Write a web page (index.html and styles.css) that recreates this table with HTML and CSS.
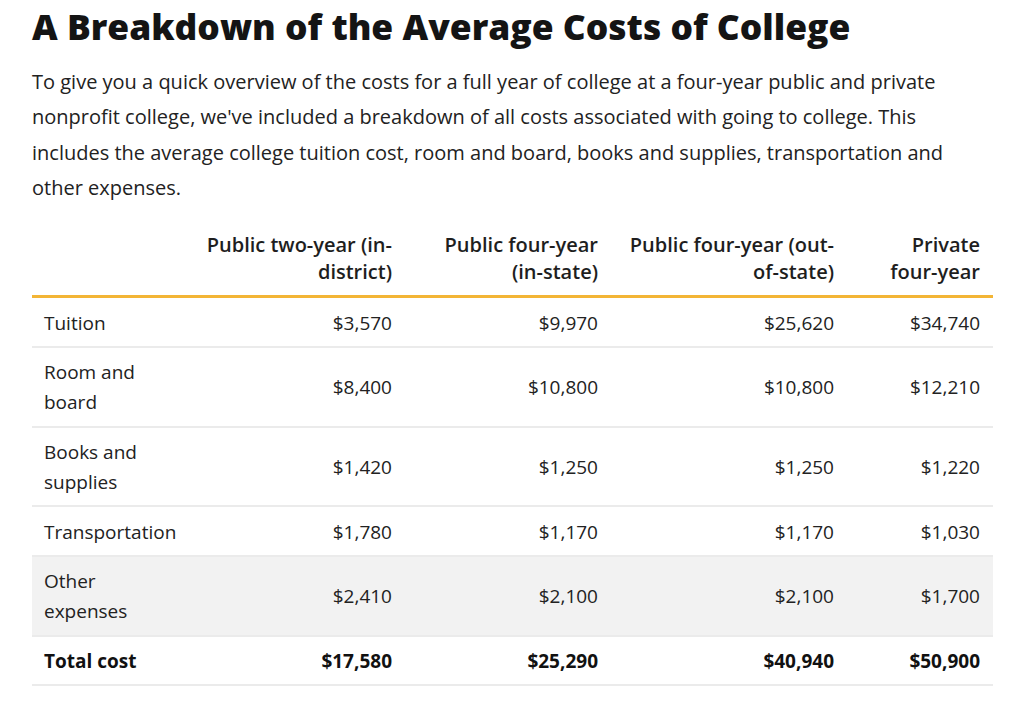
FILE: index.html
```html
<!DOCTYPE html>
<html lang="en">
<head>
<meta charset="utf-8">
<link rel="stylesheet" href="styles.css">
</head>
<body>
<main class="article">
  <h2 class="title">A Breakdown of the Average Costs of College</h2>
  <p class="intro">To give you a quick overview of the costs for a full year of college at a four-year public and private nonprofit college, we've included a breakdown of all costs associated with going to college. This includes the average college tuition cost, room and board, books and supplies, transportation and other expenses.</p>
  <table class="costs">
    <colgroup>
      <col class="c0"><col class="c1"><col class="c2"><col class="c3"><col class="c4">
    </colgroup>
    <thead>
      <tr>
        <th class="label"></th>
        <th>Public two-year (in-<br>district)</th>
        <th>Public four-year<br>(in-state)</th>
        <th>Public four-year (out-<br>of-state)</th>
        <th>Private<br>four-year</th>
      </tr>
    </thead>
    <tbody>
      <tr><td class="label">Tuition</td><td>$3,570</td><td>$9,970</td><td>$25,620</td><td>$34,740</td></tr>
      <tr><td class="label">Room and board</td><td>$8,400</td><td>$10,800</td><td>$10,800</td><td>$12,210</td></tr>
      <tr><td class="label">Books and supplies</td><td>$1,420</td><td>$1,250</td><td>$1,250</td><td>$1,220</td></tr>
      <tr><td class="label">Transportation</td><td>$1,780</td><td>$1,170</td><td>$1,170</td><td>$1,030</td></tr>
      <tr class="shaded"><td class="label">Other expenses</td><td>$2,410</td><td>$2,100</td><td>$2,100</td><td>$1,700</td></tr>
      <tr class="total"><td class="label">Total cost</td><td>$17,580</td><td>$25,290</td><td>$40,940</td><td>$50,900</td></tr>
    </tbody>
  </table>
</main>
</body>
</html>
```
FILE: styles.css
```css
html, body {
  margin: 0;
  padding: 0;
  background: #ffffff;
}
body {
  font-family: "Open Sans", "Liberation Sans", sans-serif;
  color: #222222;
}
.article {
  padding: 0 31px 0 32px;
}
.title {
  margin: 0;
  padding-top: 6px;
  font-size: 35.4px;
  font-weight: 800;
  line-height: 40px;
  color: #141414;
}
.intro {
  margin: 18px 0 0 0;
  font-size: 20px;
  line-height: 35.3px;
  color: #222222;
}
.costs {
  width: 961px;
  margin-top: 22px;
  border-collapse: collapse;
  table-layout: fixed;
  font-size: 19px;
}
.c0 { width: 160px; }
.c1 { width: 213px; }
.c2 { width: 206px; }
.c3 { width: 236px; }
.c4 { width: 146px; }
.costs th {
  font-weight: 600;
  font-size: 20px;
  line-height: 27px;
  text-align: right;
  padding: 4px 13px 10px 12px;
  vertical-align: bottom;
  border-bottom: 3px solid #f3b535;
  color: #1e1e1e;
}
.costs td {
  text-align: right;
  padding: 9.4px 13px 8.3px 12px;
  line-height: 30px;
  border-bottom: 2px solid #ebebeb;
  vertical-align: middle;
  color: #222222;
}
.costs td.label {
  text-align: left;
}
.shaded td {
  background: #f2f2f2;
}
.total td {
  font-weight: 700;
  color: #111111;
}
```
